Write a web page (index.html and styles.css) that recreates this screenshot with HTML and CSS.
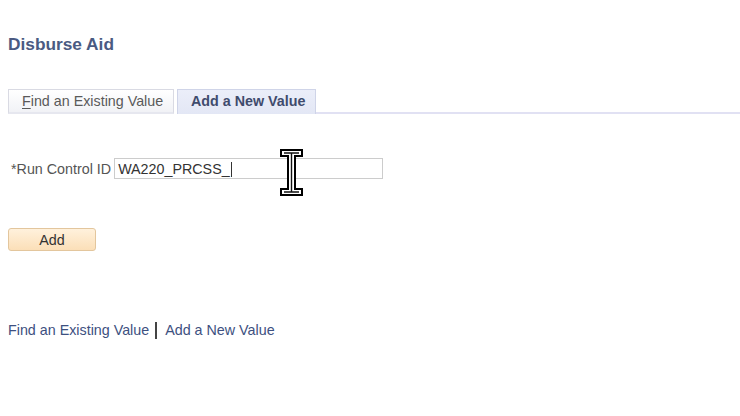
FILE: index.html
```html
<!DOCTYPE html>
<html>
<head>
<meta charset="utf-8">
<link rel="stylesheet" href="styles.css">
</head>
<body>
<div class="page">
  <h1 class="title">Disburse Aid</h1>
  <div class="tabs">
    <div class="tab tab-inactive"><span class="u">F</span>ind an Existing Value</div>
    <div class="tab tab-active">Add a New Value</div>
    <div class="tab-fill"></div>
  </div>
  <div class="field-row">
    <label class="label">*Run Control ID</label>
    <div class="input">WA220_PRCSS_<span class="caret"></span></div>
  </div>
  <div class="btn-row">
    <button class="btn">Add</button>
  </div>
  <div class="links">
    <a class="link">Find an Existing Value</a>
    <span class="sep"></span>
    <a class="link">Add a New Value</a>
  </div>
  <svg class="ibeam" width="24" height="48" viewBox="0 0 24 48">
    <polygon points="0,0 23,0 23,8 16,8 16,39 23,39 23,47 0,47 0,39 7,39 7,8 0,8" fill="#000"/>
    <polygon points="2,2 21,2 21,6 14,6 14,41 21,41 21,45 2,45 2,41 9,41 9,6 2,6" fill="#fff"/>
    <polygon points="4,3.3 19,3.3 19,4.7 12.2,4.7 12.2,42.3 19,42.3 19,43.7 4,43.7 4,42.3 10.8,42.3 10.8,4.7 4,4.7" fill="#111"/>
  </svg>
</div>
</body>
</html>
```

FILE: styles.css
```css
html, body {
  margin: 0;
  padding: 0;
  background: #fff;
}
.page {
  position: relative;
  width: 740px;
  height: 416px;
  font-family: "Liberation Sans", Arial, sans-serif;
  font-size: 14.3px;
  color: #555;
  padding-top: 34px;
  box-sizing: border-box;
}
.title {
  margin: 0 0 0 8px;
  font-size: 17.3px;
  line-height: 20px;
  font-weight: bold;
  color: #4a5a82;
}
.tabs {
  display: flex;
  align-items: flex-end;
  margin-top: 35px;
  padding-left: 8px;
}
.tab {
  box-sizing: border-box;
  height: 25px;
  padding: 3px 0 0 13px;
  line-height: 16px;
  border: 1px solid #d9dae3;
  border-bottom: none;
  white-space: nowrap;
}
.tab-inactive {
  width: 166px;
  color: #5a5a5a;
  background: linear-gradient(#ffffff, #f1f2f6);
  border-bottom: 2px solid #e6e7ef;
}
.u {
  text-decoration: underline;
  text-underline-offset: 2px;
}
.tab-active {
  margin-left: 3px;
  width: 139px;
  font-weight: bold;
  color: #3f4b6d;
  background: linear-gradient(#ebeef9, #e3e7f5);
  border-color: #cfd4e8;
}
.tab-fill {
  flex: 1;
  height: 0;
  border-bottom: 2px solid #e1e1f3;
}
.field-row {
  display: flex;
  align-items: center;
  margin-top: 44px;
  padding-left: 11px;
}
.label {
  color: #555;
  line-height: 16px;
  margin-right: 3px;
}
.input {
  box-sizing: border-box;
  width: 269px;
  height: 21px;
  border: 1px solid #cccccc;
  padding: 1px 0 0 3px;
  line-height: 17px;
  color: #333;
  display: flex;
  align-items: center;
}
.caret {
  display: inline-block;
  width: 1px;
  height: 15px;
  background: #333;
  margin-left: 1px;
}
.btn-row {
  margin-top: 49px;
  padding-left: 8px;
}
.btn {
  box-sizing: border-box;
  width: 88px;
  height: 23px;
  border: 1px solid #e3c69d;
  border-radius: 3px;
  background: linear-gradient(#fff1dc, #fbdfb8);
  font-family: "Liberation Sans", Arial, sans-serif;
  font-size: 14.3px;
  color: #333;
  padding: 0;
  line-height: 20px;
}
.links {
  display: flex;
  align-items: center;
  margin-top: 70px;
  padding-left: 8px;
  line-height: 18px;
}
.link {
  color: #3d5080;
}
.sep {
  display: inline-block;
  width: 2px;
  height: 17px;
  background: #444;
  margin: 0 8px 0 6px;
}
.ibeam {
  position: absolute;
  left: 280px;
  top: 149px;
}
```
